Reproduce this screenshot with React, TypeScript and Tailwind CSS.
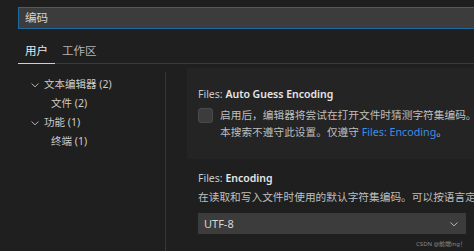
import React from 'react';

const font = { fontFamily: '"Noto Sans", "Noto Sans CJK SC", sans-serif' };

const Chevron = ({ className = '' }: { className?: string }) => (
  <svg viewBox="0 0 16 16" className={className} fill="none" stroke="currentColor" strokeWidth="1.3">
    <path d="M3.5 6 8 10.5 12.5 6" />
  </svg>
);

const treeItems = [
  { label: '文本编辑器 (2)', depth: 0, open: true },
  { label: '文件 (2)', depth: 1 },
  { label: '功能 (1)', depth: 0, open: true },
  { label: '终端 (1)', depth: 1 },
];

export default function App() {
  return (
    <div
      className="w-[474px] h-[251px] bg-[#1f1f1f] overflow-hidden relative flex flex-col text-[10.5px] text-[#cccccc]"
      style={font}
    >
      {/* search */}
      <div className="pt-[7px] pl-[18px]">
        <div className="h-[22px] -mr-4 bg-[#3c3c3c] border border-[#1f6aa0] flex items-center pl-[6px] text-[11.5px] text-[#d4d4d4]">
          编码
        </div>
      </div>

      {/* tabs */}
      <div className="ml-[18px] mt-[13px] flex border-b border-[#3a3a3a] text-[11.5px]">
        <div className="px-[7px] pb-[4px] text-[#e8e8e8] border-b border-[#cfcfcf] -mb-px">用户</div>
        <div className="px-[7px] pb-[4px] text-[#b4b4b4]">工作区</div>
      </div>

      {/* body */}
      <div className="flex flex-1">
        <div className="w-[166px] pt-[8px] flex flex-col">
          <div className="flex-1 border-r border-[#363636] pt-[3px]">
            {treeItems.map((t) => (
              <div
                key={t.label}
                className={`h-[19px] flex items-center ${t.depth === 0 ? 'pl-[29px]' : 'pl-[51px]'}`}
              >
                {t.depth === 0 && <Chevron className="w-[12px] h-[12px] mr-[3px] text-[#bdbdbd]" />}
                <span>{t.label}</span>
              </div>
            ))}
          </div>
        </div>

        <div className="flex-1 min-w-0 flex flex-col">
          {/* setting 1 (focused) */}
          <div className="ml-[21px] mt-[4px] bg-[#242424] pl-[11px] pt-[18px] pb-[18px]">
            <div className="leading-[16px] whitespace-nowrap">
              <span className="text-[#c8c8c8]">Files: </span>
              <span className="font-semibold text-[#e6e6e6]">Auto Guess Encoding</span>
            </div>
            <div className="flex mt-[5px]">
              <div className="w-[15px] h-[15px] shrink-0 mt-[1px] rounded-[3px] bg-[#3c3c3c] border border-[#4a4a4a]" />
              <div className="ml-[7px] leading-[17px] text-[10.7px] text-[#bfbfbf] whitespace-nowrap">
                <div>启用后，编辑器将尝试在打开文件时猜测字符集编码。</div>
                <div>
                  本搜索不遵守此设置。仅遵守 <span className="text-[#3a8ee6]">Files: Encoding</span>。
                </div>
              </div>
            </div>
          </div>

          {/* setting 2 */}
          <div className="ml-[21px] pl-[11px] pt-[11px]">
            <div className="leading-[16px] whitespace-nowrap">
              <span className="text-[#c8c8c8]">Files: </span>
              <span className="font-semibold text-[#e6e6e6]">Encoding</span>
            </div>
            <div className="mt-[2px] leading-[18px] text-[10.7px] text-[#bfbfbf] whitespace-nowrap">
              在读取和写入文件时使用的默认字符集编码。可以按语言定义此设置。
            </div>
            <div className="mt-[7px] w-[268px] h-[21px] bg-[#3c3c3c] flex items-center justify-between pl-[6px] pr-[6px] text-[#d6d6d6] text-[11px]">
              <span>UTF-8</span>
              <Chevron className="w-[12px] h-[12px] text-[#c0c0c0]" />
            </div>
          </div>
        </div>
      </div>

      <div className="absolute right-[8px] bottom-[4px] text-[6px] text-[#8a8a8a] leading-none">
        CSDN @前端ing！
      </div>
    </div>
  );
}
